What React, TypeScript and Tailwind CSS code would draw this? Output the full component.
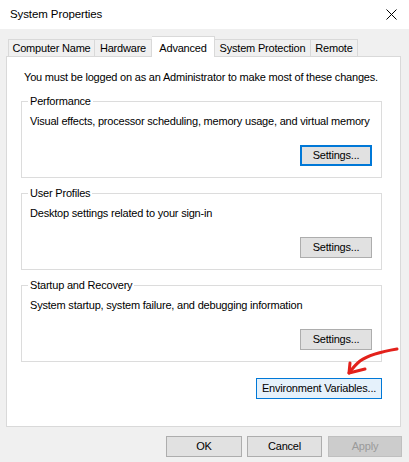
import React from 'react';

const font = { fontFamily: '"Liberation Sans", Arial, sans-serif' };

type BtnProps = {
  label: string;
  variant?: 'normal' | 'focus' | 'hover' | 'disabled';
  className?: string;
};

function WinButton({ label, variant = 'normal', className = '' }: BtnProps) {
  const styles = {
    normal: 'bg-[#e1e1e1] border border-[#adadad] text-black',
    focus: 'bg-[#e1e1e1] border-2 border-[#0078d7] text-black',
    hover: 'bg-[#e5f1fb] border border-[#0078d7] text-black',
    disabled: 'bg-[#cccccc] border border-[#bfbfbf] text-[#9a9a9a]',
  }[variant];
  return (
    <button className={`h-[21px] flex items-center justify-center text-[11px] leading-none whitespace-nowrap tracking-[-0.2px] ${styles} ${className}`}>
      {label}
    </button>
  );
}

function GroupBox({ title, text, focused }: { title: string; text: string; focused?: boolean }) {
  return (
    <div className="relative h-[77px] border border-[#dcdcdc] flex flex-col pl-[8px] pr-[9px]">
      <span className="absolute -top-[8px] left-[6px] bg-white px-[2px] text-[11px] leading-[14px]">{title}</span>
      <p className="mt-[12px] text-[11px] leading-[14px] whitespace-nowrap">{text}</p>
      <div className="flex justify-end mt-auto mb-[11px]">
        <WinButton label="Settings..." variant={focused ? 'focus' : 'normal'} className="w-[72px]" />
      </div>
    </div>
  );
}

const tab = 'h-[17px] border border-b-0 border-[#d9d9d9] flex items-center justify-center text-[11px] whitespace-nowrap';

export default function App() {
  return (
    <div className="w-[409px] h-[462px] bg-[#f0f0f0] flex flex-col text-black overflow-hidden relative tracking-[-0.2px]" style={font}>
      {/* Title bar */}
      <div className="h-[29px] bg-white flex items-center justify-between pl-[10px] pr-[9px]">
        <span className="text-[11.5px] tracking-[-0.1px]">System Properties</span>
        <svg width="11" height="11" viewBox="0 0 11 11" className="mr-[3px]">
          <path d="M0.5 0.5 L10.5 10.5 M10.5 0.5 L0.5 10.5" stroke="#000" strokeWidth="1" />
        </svg>
      </div>

      {/* Tabs */}
      <div className="flex items-end pl-[8px] mt-[7px] h-[20px] relative z-10">
        <div className={`${tab} w-[87px]`}>Computer Name</div>
        <div className={`${tab} border-l-0 w-[57px]`}>Hardware</div>
        <div className="h-[21px] -mb-[1px] bg-white border border-b-0 border-l-0 border-[#d9d9d9] flex items-start pt-[3px] justify-center text-[11px] w-[63px]">Advanced</div>
        <div className={`${tab} border-l-0 w-[96px]`}>System Protection</div>
        <div className={`${tab} border-l-0 w-[47px]`}>Remote</div>
      </div>

      {/* Panel */}
      <div className="ml-[6px] mr-[8px] h-[371px] bg-white border border-[#d9d9d9] flex flex-col pl-[14px] pr-[18px]">
        <p className="mt-[13px] pl-[3px] text-[11px] leading-[14px] whitespace-nowrap">
          You must be logged on as an Administrator to make most of these changes.
        </p>
        <div className="mt-[17px] flex flex-col gap-[15px]">
          <GroupBox title="Performance" text="Visual effects, processor scheduling, memory usage, and virtual memory" focused />
          <GroupBox title="User Profiles" text="Desktop settings related to your sign-in" />
          <GroupBox title="Startup and Recovery" text="System startup, system failure, and debugging information" />
        </div>
        <div className="flex justify-end mt-[16px]">
          <WinButton label="Environment Variables..." variant="hover" className="w-[126px]" />
        </div>
      </div>

      {/* Bottom buttons */}
      <div className="flex justify-end gap-[5px] pr-[7px] mt-[9px]">
        <WinButton label="OK" className="w-[76px]" />
        <WinButton label="Cancel" className="w-[75px]" />
        <WinButton label="Apply" variant="disabled" className="ml-[1px] w-[74px]" />
      </div>

      {/* Red hand-drawn arrow annotation */}
      <svg className="absolute left-[340px] top-[342px] pointer-events-none" width="65" height="40" viewBox="0 0 65 40">
        <path d="M57 7 C45 9 30 12 20 19 C15 23 12 27 9 31" stroke="#e3211b" strokeWidth="3" fill="none" strokeLinecap="round" />
        <path d="M10 21 L9 31 L25 27" stroke="#e3211b" strokeWidth="3" fill="none" strokeLinecap="round" strokeLinejoin="round" />
      </svg>
    </div>
  );
}
